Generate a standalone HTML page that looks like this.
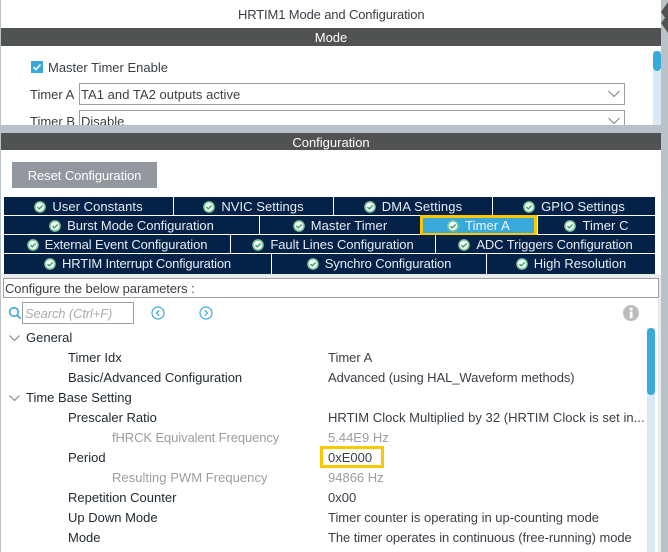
<!DOCTYPE html>
<html><head><meta charset="utf-8">
<style>
html,body{margin:0;padding:0}
body{width:668px;height:552px;overflow:hidden;position:relative;background:#fff;font-family:"Liberation Sans",sans-serif;font-size:13px;color:#3a3f45}
.a{position:absolute}
.t{position:absolute;white-space:nowrap;line-height:16px}
.bar{position:absolute;background:#505352;color:#fff;text-align:center;left:1px;width:660px}
.tab{position:absolute;background:#042248;color:#e6edf3;height:18px;line-height:19px;text-align:center;white-space:nowrap;letter-spacing:.05px}
.tab svg{vertical-align:-2px;margin-right:6px}
.k{color:#222a33}
.g{color:#9a9da1}
.sel{border:1px solid #9aa0a4;position:absolute;background:#fff;box-sizing:border-box}
</style></head><body>
<svg width="0" height="0" style="position:absolute"><defs><symbol id="c" viewBox="0 0 13 13"><circle cx="6.5" cy="6.5" r="6.3" fill="#7cc79a"/><circle cx="6.5" cy="6.5" r="4.6" fill="#fff" opacity=".92"/><path d="M3.700 6.500l2 2 3.700-3.600" fill="none" stroke="#3fa168" stroke-width="1.6"/></symbol></defs></svg>

<div class="a" style="left:0;top:0;width:1px;height:552px;background:#b8c2c8"></div>
<div class="a" style="left:661px;top:0;width:7px;height:552px;background:#b8c2c8"></div>
<svg class="a" style="left:661px;top:0" width="7" height="40"><path d="M0 12L7 2V22ZM0 23L7 14V33Z" fill="#505352"/></svg>

<div class="t" style="left:238px;top:7px;letter-spacing:-.14px">HRTIM1 Mode and Configuration</div>
<div class="bar" style="top:28px;height:18px;line-height:20px">Mode</div>

<div class="a" style="left:31px;top:61px;width:12px;height:12px;background:#39a9dc"></div>
<svg class="a" style="left:31px;top:61px" width="12" height="12"><path d="M2.500 6l2.500 2.600L9.500 3.500" fill="none" stroke="#fff" stroke-width="1.6"/></svg>
<div class="t" style="left:48px;top:60px">Master Timer Enable</div>
<div class="t" style="left:30px;top:87px">Timer A</div>
<div class="sel" style="left:79px;top:83px;width:546px;height:22px"></div>
<div class="t" style="left:81px;top:87px;letter-spacing:.04px">TA1 and TA2 outputs active</div>
<svg class="a" style="left:608px;top:90px" width="12" height="8"><path d="M.5 1L6 6.500 11.500 1" fill="none" stroke="#7b8085" stroke-width="1"/></svg>
<div class="t" style="left:30px;top:114px">Timer B</div>
<div class="sel" style="left:79px;top:110px;width:546px;height:22px"></div>
<div class="t" style="left:81px;top:114px">Disable</div>
<svg class="a" style="left:608px;top:117px" width="12" height="8"><path d="M.5 1L6 6.500 11.500 1" fill="none" stroke="#7b8085" stroke-width="1"/></svg>

<div class="a" style="left:653px;top:51px;width:8px;height:75px;background:#d9e8f5"></div>
<div class="a" style="left:653px;top:51px;width:8px;height:20px;background:#39a9dc;border-radius:4px"></div>

<div class="a" style="left:0;top:125px;width:661px;height:8px;background:#b8c2c8"></div>
<div class="bar" style="top:133px;height:17px;line-height:19px">Configuration</div>

<div class="a" style="left:12px;top:162px;width:145px;height:26px;background:#93989e;color:#fff;text-align:center;line-height:27px;letter-spacing:-.07px">Reset Configuration</div>

<!-- tabs row 1 -->
<div class="tab" style="left:4px;top:197px;width:169px"><svg width="12" height="12"><use href="#c"/></svg>User Constants</div>
<div class="tab" style="left:174px;top:197px;width:159px"><svg width="12" height="12"><use href="#c"/></svg>NVIC Settings</div>
<div class="tab" style="left:334px;top:197px;width:158px;letter-spacing:.15px"><svg width="12" height="12"><use href="#c"/></svg>DMA Settings</div>
<div class="tab" style="left:493px;top:197px;width:162px"><svg width="12" height="12"><use href="#c"/></svg>GPIO Settings</div>
<!-- row 2 -->
<div class="tab" style="left:4px;top:216px;width:255px;letter-spacing:-.03px"><svg width="12" height="12"><use href="#c"/></svg>Burst Mode Configuration</div>
<div class="tab" style="left:260px;top:216px;width:160px"><svg width="12" height="12"><use href="#c"/></svg>Master Timer</div>
<div class="tab" style="left:538px;top:216px;width:117px"><svg width="12" height="12"><use href="#c"/></svg>Timer C</div>
<div class="tab" style="left:420px;top:215px;width:117px;height:21px;box-sizing:border-box;background:#39a9dc;border:3px solid #fcc800;line-height:16px;color:#eef6fb"><svg width="12" height="12"><use href="#c"/></svg>Timer A</div>
<!-- row 3 -->
<div class="tab" style="left:4px;top:235px;width:226px;letter-spacing:-.1px"><svg width="12" height="12"><use href="#c"/></svg>External Event Configuration</div>
<div class="tab" style="left:231px;top:235px;width:204px;letter-spacing:-.05px"><svg width="12" height="12"><use href="#c"/></svg>Fault Lines Configuration</div>
<div class="tab" style="left:436px;top:235px;width:219px;letter-spacing:-.1px"><svg width="12" height="12"><use href="#c"/></svg>ADC Triggers Configuration</div>
<!-- row 4 -->
<div class="tab" style="left:4px;top:254px;width:267px;height:20px;letter-spacing:-.17px"><svg width="12" height="12"><use href="#c"/></svg>HRTIM Interrupt Configuration</div>
<div class="tab" style="left:272px;top:254px;width:214px;height:20px;letter-spacing:-.1px"><svg width="12" height="12"><use href="#c"/></svg>Synchro Configuration</div>
<div class="tab" style="left:487px;top:254px;width:168px;height:20px"><svg width="12" height="12"><use href="#c"/></svg>High Resolution</div>

<div class="a" style="left:1px;top:274px;width:660px;height:4px;background:#e9ebec"></div>
<div class="a" style="left:658px;top:274px;width:3px;height:278px;background:#e9ebec"></div>
<div class="a" style="left:3px;top:278px;width:656px;height:20px;box-sizing:border-box;border:1px solid #9aa0a4;background:#fff"></div>
<div class="t" style="left:5px;top:281px;letter-spacing:-.08px">Configure the below parameters :</div>

<svg class="a" style="left:8px;top:306px" width="14" height="14"><circle cx="6" cy="6" r="4.300" fill="none" stroke="#39a9dc" stroke-width="1.6"/><path d="M9 9l3.600 3.600" stroke="#39a9dc" stroke-width="1.8"/></svg>
<div class="a" style="left:22px;top:302px;width:112px;height:22px;box-sizing:border-box;border:1px solid #9aa0a4"></div>
<div class="t" style="left:25px;top:306px;font-style:italic;color:#a9adb1;letter-spacing:-.13px">Search (Ctrl+F)</div>
<svg class="a" style="left:151px;top:306px" width="14" height="14"><circle cx="7" cy="7" r="6" fill="none" stroke="#39a9dc" stroke-width="1.2"/><path d="M8.300 4.300L5.500 7l2.800 2.700" fill="none" stroke="#39a9dc" stroke-width="1.2"/></svg>
<svg class="a" style="left:199px;top:306px" width="14" height="14"><circle cx="7" cy="7" r="6" fill="none" stroke="#39a9dc" stroke-width="1.2"/><path d="M5.700 4.300L8.500 7l-2.800 2.700" fill="none" stroke="#39a9dc" stroke-width="1.2"/></svg>
<svg class="a" style="left:623px;top:305px" width="16" height="16"><circle cx="8" cy="8" r="8" fill="#bcbcbc"/><rect x="6.700" y="2.800" width="2.800" height="2.600" fill="#fff"/><rect x="6.700" y="6.600" width="2.800" height="6.600" fill="#fff"/></svg>

<div class="a" style="left:647px;top:328px;width:8px;height:224px;background:#d9e8f5"></div>
<div class="a" style="left:647px;top:328px;width:8px;height:67px;background:#39a9dc;border-radius:4px"></div>

<svg class="a" style="left:9px;top:335px" width="11" height="7"><path d="M.5.5L5.500 5.500 10.500 .5" fill="none" stroke="#7b8085"/></svg>
<div class="t k" style="left:26px;top:330px">General</div>
<div class="t k" style="left:68px;top:350px">Timer Idx</div>
<div class="t" style="left:328px;top:350px">Timer A</div>
<div class="t k" style="left:68px;top:370px">Basic/Advanced Configuration</div>
<div class="t" style="left:328px;top:370px;letter-spacing:-.08px">Advanced (using HAL_Waveform methods)</div>
<svg class="a" style="left:9px;top:395px" width="11" height="7"><path d="M.5.5L5.500 5.500 10.500 .5" fill="none" stroke="#7b8085"/></svg>
<div class="t k" style="left:26px;top:390px">Time Base Setting</div>
<div class="t k" style="left:68px;top:410px">Prescaler Ratio</div>
<div class="t" style="left:328px;top:410px;letter-spacing:.04px">HRTIM Clock Multiplied by 32 (HRTIM Clock is set in...</div>
<div class="t g" style="left:112px;top:430px;letter-spacing:-.1px">fHRCK Equivalent Frequency</div>
<div class="t g" style="left:328px;top:430px">5.44E9 Hz</div>
<div class="t k" style="left:68px;top:450px">Period</div>
<div class="a" style="left:320px;top:446px;width:64px;height:22px;box-sizing:border-box;border:3px solid #fcc800"></div>
<div class="t" style="left:328px;top:450px">0xE000</div>
<div class="t g" style="left:112px;top:470px;letter-spacing:.04px">Resulting PWM Frequency</div>
<div class="t g" style="left:328px;top:470px">94866 Hz</div>
<div class="t k" style="left:68px;top:490px">Repetition Counter</div>
<div class="t" style="left:328px;top:490px">0x00</div>
<div class="t k" style="left:68px;top:510px">Up Down Mode</div>
<div class="t" style="left:328px;top:510px;letter-spacing:-.02px">Timer counter is operating in up-counting mode</div>
<div class="t k" style="left:68px;top:530px">Mode</div>
<div class="t" style="left:328px;top:530px;letter-spacing:-.08px">The timer operates in continuous (free-running) mode</div>
</body></html>
